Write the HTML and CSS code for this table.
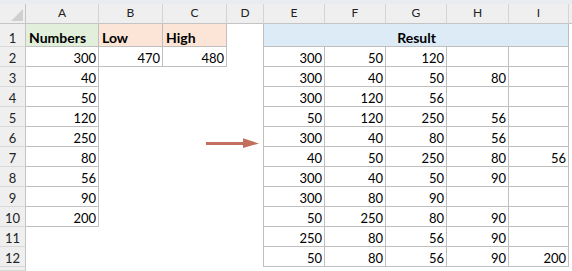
FILE: index.html
```html
<!DOCTYPE html>
<html>
<head>
<meta charset="utf-8">
<link rel="stylesheet" href="styles.css">
</head>
<body>
<div class="sheet">
  <div class="strip"></div>

  <div class="ch corner"><svg width="12" height="12" viewBox="0 0 12 12"><polygon points="0,12 12,12 12,0" fill="#cfcfcf"/></svg></div>
  <div class="ch">A</div><div class="ch">B</div><div class="ch">C</div><div class="ch">D</div>
  <div class="ch">E</div><div class="ch">F</div><div class="ch">G</div><div class="ch">H</div><div class="ch">I</div><div class="ch end"></div>

  <div class="rh">1</div>
  <div class="c b green bold">Numbers</div><div class="c b peach bold">Low</div><div class="c b peach bold">High</div><div class="c d"></div>
  <div class="c b blue bold result">Result</div><div class="c"></div>

  <div class="rh">2</div>
  <div class="c b n">300</div><div class="c b n">470</div><div class="c b n">480</div><div class="c d"></div>
  <div class="c b n">300</div><div class="c b n">50</div><div class="c b n">120</div><div class="c b n"></div><div class="c b n"></div><div class="c"></div>

  <div class="rh">3</div>
  <div class="c b n">40</div><div class="c"></div><div class="c"></div><div class="c d"></div>
  <div class="c b n">300</div><div class="c b n">40</div><div class="c b n">50</div><div class="c b n">80</div><div class="c b n"></div><div class="c"></div>

  <div class="rh">4</div>
  <div class="c b n">50</div><div class="c"></div><div class="c"></div><div class="c d"></div>
  <div class="c b n">300</div><div class="c b n">120</div><div class="c b n">56</div><div class="c b n"></div><div class="c b n"></div><div class="c"></div>

  <div class="rh">5</div>
  <div class="c b n">120</div><div class="c"></div><div class="c"></div><div class="c d"></div>
  <div class="c b n">50</div><div class="c b n">120</div><div class="c b n">250</div><div class="c b n">56</div><div class="c b n"></div><div class="c"></div>

  <div class="rh">6</div>
  <div class="c b n">250</div><div class="c"></div><div class="c"></div><div class="c d"></div>
  <div class="c b n">300</div><div class="c b n">40</div><div class="c b n">80</div><div class="c b n">56</div><div class="c b n"></div><div class="c"></div>

  <div class="rh">7</div>
  <div class="c b n">80</div><div class="c"></div><div class="c"></div><div class="c d"></div>
  <div class="c b n">40</div><div class="c b n">50</div><div class="c b n">250</div><div class="c b n">80</div><div class="c b n">56</div><div class="c"></div>

  <div class="rh">8</div>
  <div class="c b n">56</div><div class="c"></div><div class="c"></div><div class="c d"></div>
  <div class="c b n">300</div><div class="c b n">40</div><div class="c b n">50</div><div class="c b n">90</div><div class="c b n"></div><div class="c"></div>

  <div class="rh">9</div>
  <div class="c b n">90</div><div class="c"></div><div class="c"></div><div class="c d"></div>
  <div class="c b n">300</div><div class="c b n">80</div><div class="c b n">90</div><div class="c b n"></div><div class="c b n"></div><div class="c"></div>

  <div class="rh">10</div>
  <div class="c b n">200</div><div class="c"></div><div class="c"></div><div class="c d"></div>
  <div class="c b n">50</div><div class="c b n">250</div><div class="c b n">80</div><div class="c b n">90</div><div class="c b n"></div><div class="c"></div>

  <div class="rh">11</div>
  <div class="c"></div><div class="c"></div><div class="c"></div><div class="c d"></div>
  <div class="c b n">250</div><div class="c b n">80</div><div class="c b n">56</div><div class="c b n">90</div><div class="c b n"></div><div class="c"></div>

  <div class="rh">12</div>
  <div class="c"></div><div class="c"></div><div class="c"></div><div class="c d"></div>
  <div class="c b n">50</div><div class="c b n">80</div><div class="c b n">56</div><div class="c b n">90</div><div class="c b n">200</div><div class="c"></div>

  <div class="rh"></div>

  <svg class="arrow" width="56" height="12" viewBox="0 0 56 12">
    <rect x="1" y="5" width="39" height="3" fill="#c2705d"/>
    <polygon points="38,1.3 54,6.5 38,11" fill="#c2705d"/>
  </svg>
</div>
</body>
</html>
```

FILE: styles.css
```css
html, body {
  margin: 0;
  padding: 0;
  background: #ffffff;
}

.sheet {
  position: relative;
  width: 572px;
  height: 271px;
  overflow: hidden;
  display: grid;
  grid-template-columns: 26px 73px 64px 64px 37px 61px 61px 61px 62px 60px 1fr;
  grid-template-rows: 4px 20px 23px repeat(11, 20px) 1fr;
  font-family: "Lato", "Liberation Sans", sans-serif;
  font-size: 13px;
  color: #000;
}

.sheet > div {
  box-sizing: border-box;
  min-width: 0;
}

.strip {
  grid-column: 1 / -1;
  background: #e9edf1;
}

.ch {
  background: #efefef;
  border-right: 1px solid #d4d4d4;
  border-bottom: 1px solid #c4c4c4;
  display: flex;
  align-items: center;
  justify-content: center;
  font-size: 12px;
  line-height: 18px;
  padding-bottom: 1px;
  color: #222;
}

.ch.end {
  border-right: none;
}

.corner {
  justify-content: flex-end;
  align-items: flex-end;
  padding: 0 2px 2px 0;
  border-right-color: #c4c4c4;
}

.corner svg {
  display: block;
}

.rh {
  background: #efefef;
  border-right: 1px solid #c4c4c4;
  border-bottom: 1px solid #d8d8d8;
  display: flex;
  align-items: flex-end;
  justify-content: center;
  line-height: 16px;
  color: #222;
}

.c {
  display: flex;
  align-items: flex-end;
  line-height: 16px;
  padding: 0 2px 0 3px;
  white-space: nowrap;
}

.b {
  border-right: 1px solid #bfbfbf;
  border-bottom: 1px solid #bfbfbf;
}

.d {
  border-right: 1px solid #bfbfbf;
}

.n {
  justify-content: flex-end;
}

.bold {
  font-weight: 700;
  font-size: 14px;
}

.green {
  background: #e2efda;
}

.peach {
  background: #fce4d6;
}

.blue {
  background: #ddebf7;
}

.result {
  grid-column: span 5;
  justify-content: center;
}

.arrow {
  position: absolute;
  left: 205px;
  top: 137px;
  display: block;
}
```
